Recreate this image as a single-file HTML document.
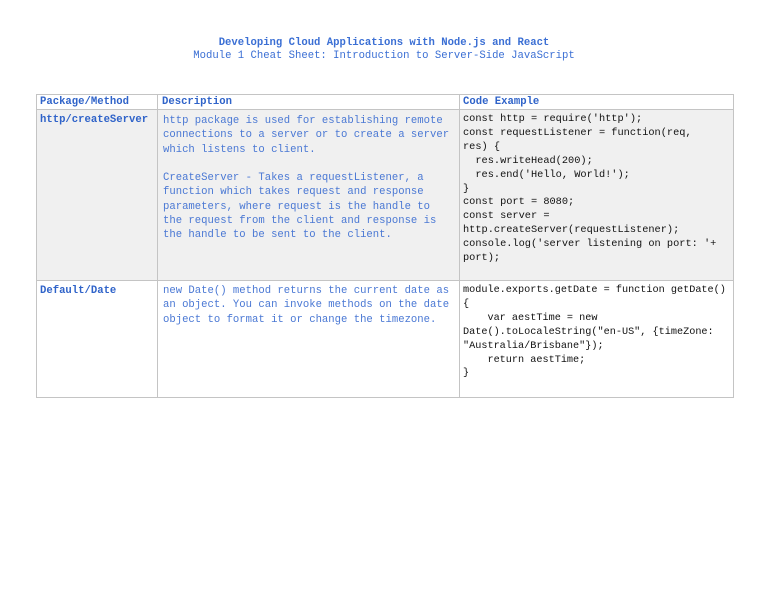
<!DOCTYPE html>
<html><head><style>
body{margin:0;width:768px;height:594px;background:#fff;font-family:"Liberation Mono",monospace;position:relative;overflow:hidden}
.t{position:absolute;left:0;width:768px;text-align:center;color:#3b6fd4;font-size:10.6px}
.c{position:absolute;font-size:10.6px;line-height:14.3px;white-space:pre;color:#4a78d4}
.k{color:#111;line-height:13.9px;font-size:10.3px}
.b{font-weight:bold;color:#2f63c9}
.ln{position:absolute;background:#c4c4c4}
</style></head><body>
<div class="t" style="top:37px;font-weight:bold">Developing Cloud Applications with Node.js and React</div>
<div class="t" style="top:50px">Module 1 Cheat Sheet: Introduction to Server-Side JavaScript</div>
<div style="position:absolute;left:36px;top:109px;width:697px;height:171px;background:#f0f0f0"></div>
<div class="ln" style="left:36px;top:94px;width:697px;height:1px"></div>
<div class="ln" style="left:36px;top:109px;width:697px;height:1px"></div>
<div class="ln" style="left:36px;top:280px;width:697px;height:1px"></div>
<div class="ln" style="left:36px;top:397px;width:697px;height:1px"></div>
<div class="ln" style="left:36px;top:94px;width:1px;height:304px"></div>
<div class="ln" style="left:157px;top:94px;width:1px;height:304px"></div>
<div class="ln" style="left:459px;top:94px;width:1px;height:304px"></div>
<div class="ln" style="left:733px;top:94px;width:1px;height:304px"></div>
<div class="c b" style="left:40px;top:95px">Package/Method</div>
<div class="c b" style="left:162px;top:95px">Description</div>
<div class="c b" style="left:463px;top:95px">Code Example</div>
<div class="c b" style="left:40px;top:113px">http/createServer</div>
<div class="c" style="left:163px;top:114px">http package is used for establishing remote
connections to a server or to create a server
which listens to client.

CreateServer - Takes a requestListener, a
function which takes request and response
parameters, where request is the handle to
the request from the client and response is
the handle to be sent to the client.</div>
<div class="c k" style="left:463px;top:113px">const http = require('http');
const requestListener = function(req,
res) {
  res.writeHead(200);
  res.end('Hello, World!');
}
const port = 8080;
const server =
http.createServer(requestListener);
console.log('server listening on port: '+
port);</div>
<div class="c b" style="left:40px;top:284px">Default/Date</div>
<div class="c" style="left:163px;top:284px">new Date() method returns the current date as
an object. You can invoke methods on the date
object to format it or change the timezone.</div>
<div class="c k" style="left:463px;top:284px;font-size:10.2px">module.exports.getDate = function getDate()
{
    var aestTime = new
Date().toLocaleString("en-US", {timeZone:
"Australia/Brisbane"});
    return aestTime;
}</div>
</body></html>
